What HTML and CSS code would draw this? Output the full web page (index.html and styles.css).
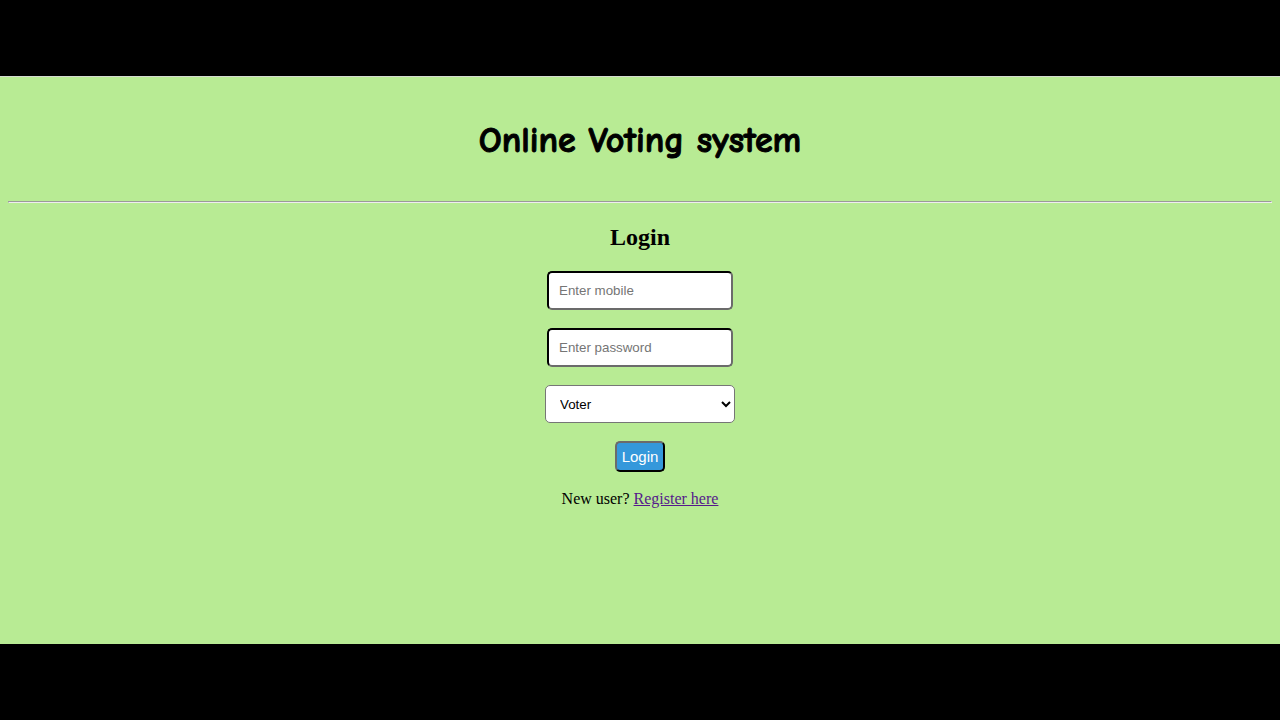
FILE: index.html
```html
<!DOCTYPE html>
<html lang="en">
<head>
    <meta charset="UTF-8">
    <meta name="viewport" content="width=device-width, initial-scale=1.0">
    <title>Online Voting system</title>
    <link rel="stylesheet" href="styles.css">
</head>
<body>
    <main class="page">
        <h1>Online Voting system</h1>
        <hr>
        <h2>Login</h2>
        <form class="login-form">
            <input type="text" name="mobile" placeholder="Enter mobile" aria-label="Mobile">
            <input type="password" name="password" placeholder="Enter password" aria-label="Password">
            <select name="role" aria-label="Role">
                <option value="1">Voter</option>
                <option value="2">Group</option>
            </select>
            <button type="submit">Login</button>
            <p>New user? <a href="#register">Register here</a></p>
        </form>
    </main>
</body>
</html>
```

FILE: styles.css
```css
* {
    box-sizing: border-box;
}
body {
    margin: 0;
    min-height: 100vh;
    padding: 76px 0;
    display: flex;
    background-color: #000;
    font-family: "Liberation Serif", "Times New Roman", serif;
    font-size: 16px;
}
.page {
    flex: 1;
    padding: 0 8px;
    border-top: 1px solid #d5dbd0;
    background-color: #b8eb94;
    text-align: center;
}
h1 {
    margin: 40px 0 36px;
    font-family: "Comic Sans MS", "Comic Neue", "Open Sans", sans-serif;
    font-size: 36px;
    line-height: 48px;
    -webkit-text-stroke: 1px #000;
}
hr {
    margin: 0;
}
h2 {
    margin: 20px 0;
    font-size: 24px;
    line-height: 28px;
}
.login-form {
    display: flex;
    flex-direction: column;
    align-items: center;
    gap: 18px;
}
input,
select {
    border-radius: 5px;
    font-family: "Liberation Sans", Arial, sans-serif;
    background-color: #fff;
}
input {
    width: 186px;
    height: 39px;
    padding: 10px;
    border: 2px solid;
    border-color: #000 #6b6b6b #6b6b6b #000;
}
select {
    width: 190px;
    height: 38px;
    padding: 10px;
    border: 1px solid #767676;
}
button {
    height: 31px;
    padding: 5px;
    border: 2px solid;
    border-color: #6b6b6b #000 #000 #6b6b6b;
    border-radius: 5px;
    background-color: #3498db;
    color: #fff;
    font-family: "Liberation Sans", Arial, sans-serif;
    font-size: 15px;
}
p {
    margin: 0;
    line-height: 18px;
}
a {
    color: #551a8b;
}
```
